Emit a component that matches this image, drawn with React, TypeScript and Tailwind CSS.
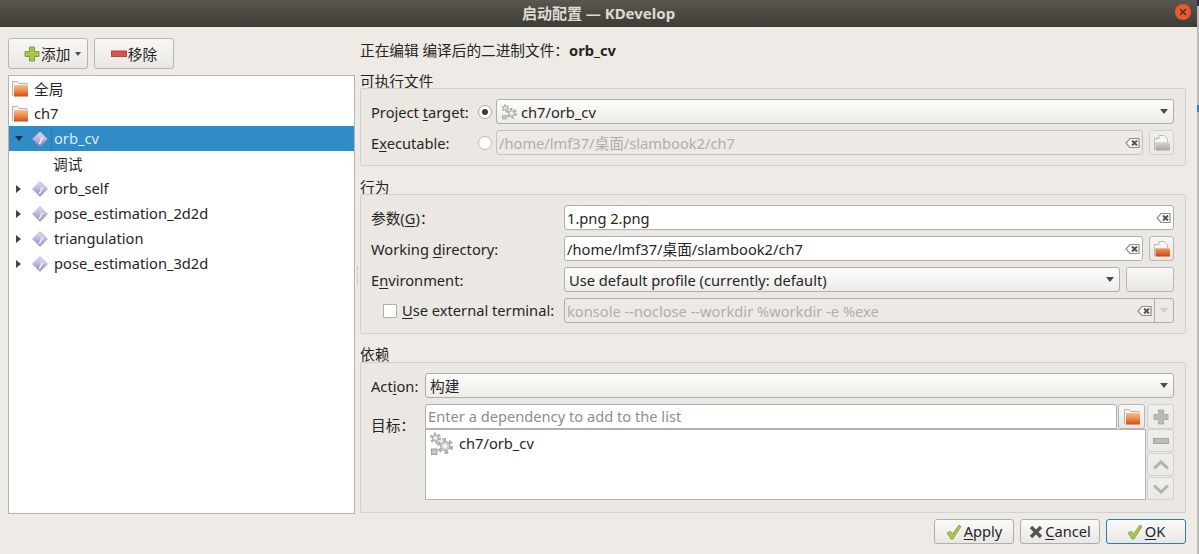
import type { ReactNode } from "react";

const FONT = "font-['Noto_Sans','Noto_Sans_CJK_SC',sans-serif]";

function FolderIcon({ size = 16 }: { size?: number }) {
  return (
    <svg width={size} height={size} viewBox="0 0 16 16" className="shrink-0">
      <defs>
        <linearGradient id="folderOrange" x1="0" y1="0" x2="0" y2="1">
          <stop offset="0" stopColor="#f6c08e" />
          <stop offset="0.5" stopColor="#ec8a4a" />
          <stop offset="1" stopColor="#d9481a" />
        </linearGradient>
      </defs>
      <path d="M.5 15V.5h5l1.500 2h8V5" fill="#f6f5f3" stroke="#b4b2ae" />
      <rect x="2" y="4" width="14" height="11.500" fill="url(#folderOrange)" />
    </svg>
  );
}

function BrowseIcon({ muted = false }: { muted?: boolean }) {
  const id = muted ? "browseMuted" : "browseOrange";
  return (
    <svg width="16" height="16" viewBox="0 0 16 16">
      <defs>
        <linearGradient id={id} x1="0" y1="0" x2="0" y2="1">
          <stop offset="0" stopColor={muted ? "#d6d4d0" : "#f09a5c"} />
          <stop offset="1" stopColor={muted ? "#a8a6a2" : "#d43f13"} />
        </linearGradient>
      </defs>
      <path d="M.5 15V8" fill="none" stroke="#bdbbb7" />
      <path d="M.5 8V3.500h4.500V.5h5l3.500 3V8z" fill="#f7f6f4" stroke="#bdbbb7" />
      <rect x="1.500" y="7.500" width="14.500" height="8" fill={`url(#${id})`} />
    </svg>
  );
}

function TargetIcon() {
  return (
    <svg width="16" height="16" viewBox="0 0 16 16" className="shrink-0">
      <defs>
        <linearGradient id="targetFill" x1="0" y1="0" x2="0" y2="1">
          <stop offset="0" stopColor="#e4dff2" />
          <stop offset="1" stopColor="#9585bf" />
        </linearGradient>
      </defs>
      <path d="M8 .5 15.500 8 8 15.500.5 8z" fill="url(#targetFill)" stroke="#a99fc8" strokeWidth="0.600" />
      <path d="M8 1.500 14.500 8H8z" fill="#cfc8e6" />
      <path d="M6.500 12.500 10 6.500l1 .8-3 6z" fill="#f6f4fb" />
    </svg>
  );
}

function Gear({ cx, cy, r }: { cx: number; cy: number; r: number }) {
  return (
    <g>
      <circle cx={cx} cy={cy} r={r} fill="none" stroke="#b0afac" strokeWidth={r * 0.5} strokeDasharray={`${r * 0.55} ${r * 0.5}`} />
      <circle cx={cx} cy={cy} r={r * 0.72} fill="#d2d1ce" stroke="#989794" strokeWidth="0.800" />
      <circle cx={cx} cy={cy} r={r * 0.32} fill="#f7f6f5" />
    </g>
  );
}

function GearsIcon({ size = 16 }: { size?: number }) {
  return (
    <svg width={size} height={size} viewBox="0 0 24 24" className="shrink-0">
      <Gear cx={6.500} cy={6} r={4.500} />
      <Gear cx={16} cy={14} r={6.500} />
      <rect x="2.500" y="17" width="5.500" height="5.500" fill="#c8c7c4" stroke="#a09f9c" />
    </svg>
  );
}

function ClearIcon() {
  return (
    <svg width="15" height="12" viewBox="0 0 15 12" className="shrink-0">
      <path d="M14 1.500H5L1 6l4 4.500h9z" fill="#fff" stroke="#8d8c88" strokeWidth="1.200" />
      <path d="M7 3.500l5 5M12 3.500l-5 5" stroke="#55544f" strokeWidth="2" />
    </svg>
  );
}

function Caret({ muted = false }: { muted?: boolean }) {
  return (
    <svg width="8" height="5" viewBox="0 0 8 5" className="shrink-0">
      <path d="M0 0h8L4 5z" fill={muted ? "#cfcdc9" : "#4d4c48"} />
    </svg>
  );
}

function ComboBox({ children, className = "" }: { children: ReactNode; className?: string }) {
  return (
    <div className={`flex h-[25px] items-center rounded-[3px] border border-[#b0aeaa] bg-gradient-to-b from-[#fdfdfc] to-[#eeece9] pl-1 pr-[5px] text-[#26251f] ${className}`}>
      <div className="flex min-w-0 flex-1 items-center">{children}</div>
      <Caret />
    </div>
  );
}

function LineEdit({ value, disabled = false, className = "" }: { value: string; disabled?: boolean; className?: string }) {
  return (
    <div className={`flex h-[25px] items-center rounded-[3px] border pl-[2px] pr-[2px] ${disabled ? "border-[#c6c4c0] bg-[#edeae6] text-[#b0aeaa]" : "border-[#b0aeaa] bg-white text-[#26251f]"} ${className}`}>
      <span className="flex-1 truncate">{value}</span>
      <ClearIcon />
    </div>
  );
}

function ToolBtn({ children, muted = false, className = "" }: { children?: ReactNode; muted?: boolean; className?: string }) {
  return (
    <div className={`flex items-center justify-center rounded-[3px] border bg-gradient-to-b ${muted ? "border-[#d3d1cd] from-[#f0eeeb] to-[#eceae6]" : "border-[#b8b6b2] from-[#f9f8f7] to-[#e9e7e3]"} ${className}`}>
      {children}
    </div>
  );
}

function Key({ children }: { children: string }) {
  return <span className="underline underline-offset-2">{children}</span>;
}

function GroupBox({ title, leading, className, children }: { title: string; leading: string; className: string; children: ReactNode }) {
  return (
    <div className="flex flex-col">
      <div className={`h-[19px] text-[#26251f] ${leading}`}>{title}</div>
      <div className={`rounded-[2px] border border-[#d4d1cc] bg-[#ebe8e3] ${className}`}>{children}</div>
    </div>
  );
}

function TreeRow({ label, selected = false, open = false }: { label: string; selected?: boolean; open?: boolean }) {
  return (
    <div className={`flex h-[25px] items-center ${selected ? "bg-[#308cc6] text-[#dcebf6]" : "text-[#26251f]"}`}>
      <div className="flex w-[23px] justify-center pr-1">
        {open ? (
          <svg width="8" height="5" viewBox="0 0 8 5"><path d="M0 0h8L4 5z" fill="#1f2d3a" /></svg>
        ) : (
          <svg width="5" height="8" viewBox="0 0 5 8"><path d="M0 0l5 4-5 4z" fill="#45443f" /></svg>
        )}
      </div>
      <TargetIcon />
      <span className={selected ? "ml-[3px] border-l border-[#2a7db2] pl-[2px] leading-[25px]" : "ml-[6px] pb-[2px]"}>{label}</span>
    </div>
  );
}

function PageBtn({ icon, children, primary = false }: { icon: ReactNode; children: ReactNode; primary?: boolean }) {
  return (
    <div className={`flex h-[25px] w-[80px] items-center justify-center gap-[2px] rounded-[3px] border bg-gradient-to-b from-[#fbfafa] to-[#e9e7e4] text-[#26251f] ${primary ? "border-[#2a7db2]" : "border-[#b0aeaa]"}`}>
      {icon}
      <span className="pb-[2px]">{children}</span>
    </div>
  );
}

function CheckIcon() {
  return (
    <svg width="16" height="16" viewBox="0 0 16 16">
      <path d="M1 9l3-2 2.500 3L13 1l2 1.500L7 15H5z" fill="#a4c94a" stroke="#8c9a5b" strokeWidth="0.800" />
    </svg>
  );
}

export default function App() {
  return (
    <div className={`${FONT} flex h-[554px] w-[1199px] overflow-hidden bg-[#bdbbb8] text-[14.67px]`}>
      <div className="flex w-[1197px] flex-col bg-[#eeebe7]">
        <div className="relative flex h-[27px] shrink-0 items-center justify-center bg-gradient-to-b from-[#5a574f] to-[#3e3c36] text-[15px] font-bold text-[#dfdbd2]">
          启动配置 — KDevelop
          <div className="absolute right-[6px] top-1 flex h-4 w-4 items-center justify-center rounded-full bg-[#e9592b]">
            <svg width="8" height="8" viewBox="0 0 8 8"><path d="M1 1l6 6M7 1L1 7" stroke="#4a2a1c" strokeWidth="1.200" /></svg>
          </div>
        </div>

        <div className="flex flex-1 pl-2 pr-[11px] pt-[11px]">
          <div className="flex w-[347px] flex-col">
            <div className="flex h-[31px] gap-[6px]">
              <div className="flex w-[80px] items-center rounded-[3px] border border-[#b8b6b2] bg-gradient-to-b from-[#f9f8f7] to-[#e9e7e3] pl-[15px] text-[#26251f]">
                <svg width="16" height="16" viewBox="0 0 16 16" className="shrink-0"><path d="M5.500 1h5v4.500H15v5h-4.500V15h-5v-4.500H1v-5h4.500z" fill="#a5c84c" stroke="#84993f" /></svg>
                <span className="ml-[1px]">添加</span>
                <div className="ml-[5px]"><svg width="6" height="4" viewBox="0 0 6 4"><path d="M0 0h6L3 4z" fill="#4d4c48" /></svg></div>
              </div>
              <div className="flex w-[80px] items-center justify-center rounded-[3px] border border-[#b8b6b2] bg-gradient-to-b from-[#f9f8f7] to-[#e9e7e3] text-[#26251f]">
                <svg width="16" height="8" viewBox="0 0 16 8" className="shrink-0"><rect x="0.500" y="1" width="15" height="5.500" fill="#d9534f" stroke="#a94b48" /></svg>
                <span className="ml-[1px]">移除</span>
              </div>
            </div>
            <div className="mt-[6px] h-[439px] border border-[#b6b3ae] bg-white">
              <div className="flex h-[25px] items-center pl-[3px] text-[#26251f]"><FolderIcon /><span className="pl-[6px]">全局</span></div>
              <div className="flex h-[25px] items-center pl-[3px] text-[#26251f]"><FolderIcon /><span className="pb-[2px] pl-[6px]">ch7</span></div>
              <TreeRow label="orb_cv" selected open />
              <div className="flex h-[25px] items-center pl-[44px] text-[#26251f]">调试</div>
              <TreeRow label="orb_self" />
              <TreeRow label="pose_estimation_2d2d" />
              <TreeRow label="triangulation" />
              <TreeRow label="pose_estimation_3d2d" />
            </div>
          </div>

          <div className="w-[5px] shrink-0 pl-[2px] pt-[229px]">
            <div className="h-[18px] border-l border-dotted border-[#b5b2ad]" />
          </div>

          <div className="flex flex-1 flex-col">
            <div className="flex h-[24px] items-center text-[#26251f]">正在编辑 编译后的二进制文件：<b className="font-bold">orb_cv</b></div>
            <div className="mt-[7px]">
              <GroupBox title="可执行文件" leading="leading-[25px]" className="flex h-[78px] flex-col gap-[6px] pl-[10px] pr-[11px] pt-[10px]">
                <div className="flex items-center">
                  <span className="w-[107px] text-[#26251f]">Project <Key>t</Key>arget:</span>
                  <div className="flex h-[14px] w-[14px] items-center justify-center rounded-full border border-[#a9a7a3] bg-white"><div className="h-[6px] w-[6px] rounded-full bg-[#3c3b37]" /></div>
                  <ComboBox className="ml-[4px] flex-1"><GearsIcon /><span className="ml-[4px]">ch7/orb_cv</span></ComboBox>
                </div>
                <div className="flex items-center">
                  <span className="w-[107px] text-[#26251f]">E<Key>x</Key>ecutable:</span>
                  <div className="h-[14px] w-[14px] rounded-full border border-[#bdbbb7] bg-white" />
                  <LineEdit disabled value="/home/lmf37/桌面/slambook2/ch7" className="ml-[4px] flex-1" />
                  <ToolBtn muted className="ml-[6px] h-[25px] w-[25px]"><BrowseIcon muted /></ToolBtn>
                </div>
              </GroupBox>
            </div>
            <div className="mt-[9px]">
              <GroupBox title="行为" leading="leading-[25px]" className="flex h-[140px] flex-col gap-[6px] pl-[10px] pr-[11px] pt-[10px]">
                <div className="flex items-center">
                  <span className="w-[193px] text-[#26251f]">参数(<Key>G</Key>)：</span>
                  <LineEdit value="1.png 2.png" className="flex-1" />
                </div>
                <div className="flex items-center">
                  <span className="w-[193px] text-[#26251f]">Working <Key>d</Key>irectory:</span>
                  <LineEdit value="/home/lmf37/桌面/slambook2/ch7" className="flex-1" />
                  <ToolBtn className="ml-[6px] h-[25px] w-[25px]"><BrowseIcon /></ToolBtn>
                </div>
                <div className="flex items-center">
                  <span className="w-[193px] text-[#26251f]">E<Key>n</Key>vironment:</span>
                  <ComboBox className="flex-1">Use default profile (currently: default)</ComboBox>
                  <ToolBtn className="ml-[6px] h-[25px] w-[48px]" />
                </div>
                <div className="flex items-center">
                  <div className="ml-[12px] h-[14px] w-[14px] rounded-[1px] border border-[#b0aeaa] bg-white" />
                  <span className="ml-[5px] w-[162px] whitespace-nowrap pb-[2px] text-[#26251f]"><Key>U</Key>se external terminal:</span>
                  <div className="flex h-[25px] flex-1 items-center rounded-[3px] border border-[#b0aeaa] bg-[#edeae6] pl-[2px] text-[#b0aeaa]">
                    <span className="flex-1 truncate">konsole --noclose --workdir %workdir -e %exe</span>
                    <ClearIcon />
                    <div className="ml-[2px] flex h-full w-[19px] items-center justify-center border-l border-[#b0aeaa]"><Caret muted /></div>
                  </div>
                </div>
              </GroupBox>
            </div>
            <div className="mt-[9px]">
              <GroupBox title="依赖" leading="leading-[23px]" className="flex h-[151px] flex-col pl-[10px] pr-[11px] pt-[10px]">
                <div className="flex items-center">
                  <span className="w-[54px] text-[#26251f]">Act<Key>i</Key>on:</span>
                  <ComboBox className="flex-1">构建</ComboBox>
                </div>
                <div className="mt-[6px] flex">
                  <span className="w-[54px] pt-[9px] leading-[25px] text-[#26251f]">目标：</span>
                  <div className="flex flex-1 flex-col">
                    <div className="flex">
                      <div className="flex h-[25px] flex-1 items-center rounded-t-[3px] border border-[#b0aeaa] bg-white pb-[2px] pl-[2px] text-[#8f8d89]">Enter a dependency to add to the list</div>
                      <ToolBtn className="ml-[1px] h-[25px] w-[27px]"><FolderIcon /></ToolBtn>
                      <ToolBtn muted className="ml-[2px] h-[25px] w-[27px]">
                        <svg width="16" height="16" viewBox="0 0 16 16"><path d="M5.500 1h5v4.500H15v5h-4.500V15h-5v-4.500H1v-5h4.500z" fill="#bdbbb7" stroke="#acaaa6" /></svg>
                      </ToolBtn>
                    </div>
                    <div className="flex">
                      <div className="flex h-[71px] flex-1 items-start border border-[#b6b3ae] bg-white pl-[3px] pt-[2px] text-[#26251f]">
                        <GearsIcon size={24} /><span className="ml-[6px] leading-[22px]">ch7/orb_cv</span>
                      </div>
                      <div className="ml-[1px] flex w-[27px] flex-col gap-[1px]">
                        <ToolBtn muted className="h-[23px]"><svg width="16" height="6" viewBox="0 0 16 6"><rect x="0.500" y="0.500" width="15" height="5" fill="#bdbbb7" stroke="#a9a7a3" /></svg></ToolBtn>
                        <ToolBtn muted className="h-[23px]"><svg width="16" height="10" viewBox="0 0 16 10"><path d="M1 8.500 8 2l7 6.500" fill="none" stroke="#b4b2ae" strokeWidth="3" /></svg></ToolBtn>
                        <ToolBtn muted className="h-[23px]"><svg width="16" height="10" viewBox="0 0 16 10"><path d="M1 1.500 8 8l7-6.500" fill="none" stroke="#b4b2ae" strokeWidth="3" /></svg></ToolBtn>
                      </div>
                    </div>
                  </div>
                </div>
              </GroupBox>
            </div>
            <div className="mt-[6px] flex justify-end gap-[6px]">
              <PageBtn icon={<CheckIcon />}><Key>A</Key>pply</PageBtn>
              <PageBtn icon={<svg width="14" height="14" viewBox="0 0 14 14"><path d="M2 2l10 10M12 2 2 12" stroke="#55544f" strokeWidth="3.500" /></svg>}><Key>C</Key>ancel</PageBtn>
              <PageBtn primary icon={<CheckIcon />}><Key>O</Key>K</PageBtn>
            </div>
          </div>
        </div>
      </div>
      <div className="flex w-[2px] flex-col">
        <div className="h-[6px] bg-[#3a2a4a]" />
        <div className="mt-[99px] h-[7px] bg-[#2f7fd0]" />
      </div>
    </div>
  );
}
